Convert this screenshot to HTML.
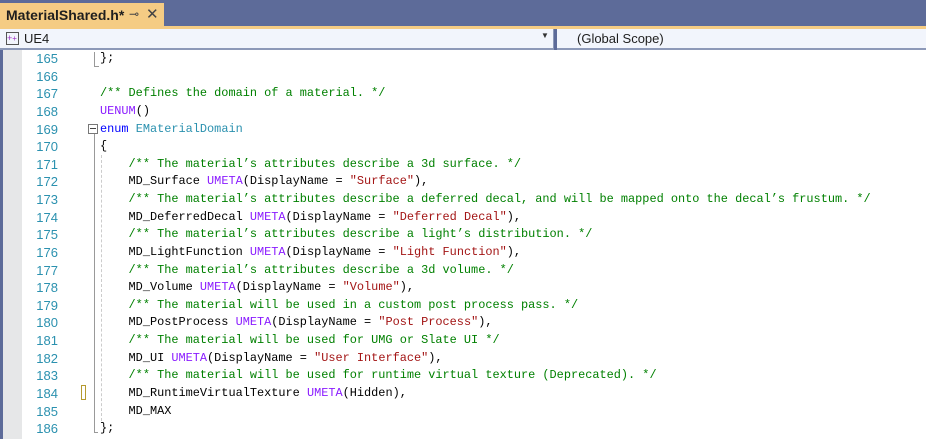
<!DOCTYPE html>
<html><head><meta charset="utf-8"><style>
body{margin:0;width:926px;height:439px;overflow:hidden;background:#5d6b99;font-family:"Liberation Sans",sans-serif;position:relative}
.tab{position:absolute;left:0;top:3px;width:164px;height:24px;background:#f5cc84}
.tab .t{position:absolute;left:6px;top:4px;font-size:14px;font-weight:bold;color:#1e1e1e}
.bar{position:absolute;left:0;top:26px;width:926px;height:3px;background:#f5cc84}
.drop{position:absolute;top:29px;height:19px;background:#f2f5fc;border-bottom:2px solid #8d99b8;font-size:13px;color:#1e1e1e}
.ed{position:absolute;left:3px;top:50px;width:923px;height:389px;background:#fff}
.mg{position:absolute;left:3px;top:50px;width:19px;height:389px;background:#e6e7e8}
.code{position:absolute;top:50px;left:0;width:926px;height:389px;overflow:hidden;font-family:"Liberation Mono",monospace;font-size:11.9px;line-height:17.62px;white-space:pre}
.ln{position:absolute;left:22px;top:0;width:36px;text-align:right;color:#2b91af;font-family:"Liberation Sans",sans-serif;font-size:13px}
.tx{position:absolute;left:100px;top:0;color:#000}
.c{color:#008000}.m{color:#8a1bff}.k{color:#0000ff}.e{color:#2b91af}.s{color:#a31515}
</style></head><body>
<div class="tab"><span class="t">MaterialShared.h*</span><span style="position:absolute;left:129px;top:4px;font-size:12px;color:#444">⊸</span><span style="position:absolute;left:146px;top:2px;font-size:15px;color:#444">✕</span></div>
<div class="bar"></div>
<div class="drop" style="left:0;width:553px;border-right:1px solid #8d99b8">
<span style="position:absolute;left:6px;top:3px;width:11px;height:11px;border:1px solid #555;font-size:9px;color:#9b30c0;line-height:10px">+<span style="font-size:8px">+</span></span>
<span style="position:absolute;left:24px;top:2px">UE4</span>
<span style="position:absolute;left:541px;top:2px;font-size:8px;color:#333">▼</span></div>
<div class="drop" style="left:557px;width:369px"><span style="position:absolute;left:20px;top:2px">(Global Scope)</span></div>
<div class="ed"></div><div class="mg"></div>
<div style="position:absolute;left:94px;top:52px;height:14px;border-left:1px solid #999;width:4px;border-bottom:1px solid #999"></div>
<div style="position:absolute;left:88px;top:124px;width:8px;height:8px;border:1px solid #777;background:#fff"></div>
<div style="position:absolute;left:90px;top:128px;width:6px;height:1px;background:#444"></div>
<div style="position:absolute;left:94px;top:134px;height:298px;border-left:1px solid #999"></div>
<div style="position:absolute;left:94px;top:432px;width:4px;border-bottom:1px solid #999"></div>
<div style="position:absolute;left:101px;top:155px;height:266px;border-left:1px dashed #ccc"></div>
<div style="position:absolute;left:81px;top:385px;width:3px;height:13px;border:1px solid #b59a30"></div>
<div class="code"><div class="ln">165
166
167
168
169
170
171
172
173
174
175
176
177
178
179
180
181
182
183
184
185
186</div><div class="tx">};

<span class="c">/** Defines the domain of a material. */</span>
<span class="m">UENUM</span>()
<span class="k">enum</span> <span class="e">EMaterialDomain</span>
{
    <span class="c">/** The material’s attributes describe a 3d surface. */</span>
    MD_Surface <span class="m">UMETA</span>(DisplayName = <span class="s">″Surface″</span>),
    <span class="c">/** The material’s attributes describe a deferred decal, and will be mapped onto the decal’s frustum. */</span>
    MD_DeferredDecal <span class="m">UMETA</span>(DisplayName = <span class="s">″Deferred Decal″</span>),
    <span class="c">/** The material’s attributes describe a light’s distribution. */</span>
    MD_LightFunction <span class="m">UMETA</span>(DisplayName = <span class="s">″Light Function″</span>),
    <span class="c">/** The material’s attributes describe a 3d volume. */</span>
    MD_Volume <span class="m">UMETA</span>(DisplayName = <span class="s">″Volume″</span>),
    <span class="c">/** The material will be used in a custom post process pass. */</span>
    MD_PostProcess <span class="m">UMETA</span>(DisplayName = <span class="s">″Post Process″</span>),
    <span class="c">/** The material will be used for UMG or Slate UI */</span>
    MD_UI <span class="m">UMETA</span>(DisplayName = <span class="s">″User Interface″</span>),
    <span class="c">/** The material will be used for runtime virtual texture (Deprecated). */</span>
    MD_RuntimeVirtualTexture <span class="m">UMETA</span>(Hidden),
    MD_MAX
};</div></div>
</body></html>
